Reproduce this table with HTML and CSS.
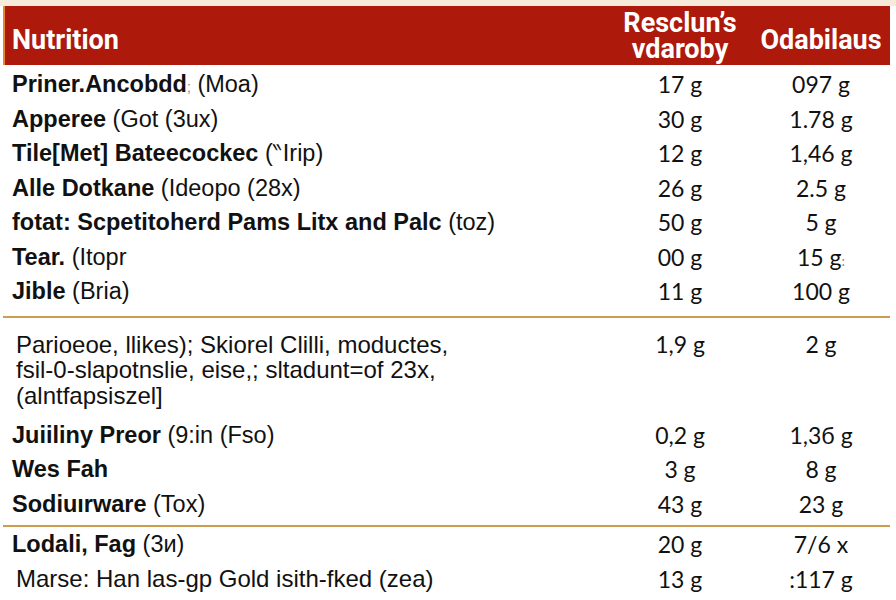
FILE: index.html
```html
<!DOCTYPE html>
<html lang="en">
<head>
<meta charset="utf-8">
<title>Nutrition</title>
<link rel="stylesheet" href="styles.css">
</head>
<body>
<div class="page">
  <div class="head">
    <div class="head-title">Nutrition</div>
    <div class="head-col"><span class="hl">Resclun’s</span><span class="hl">vdaroby</span></div>
    <div class="head-col single">Odabilaus</div>
  </div>

  <div class="section first">
    <div class="row"><div class="label"><b>Priner.Ancobdd</b><span class="mark">;</span> (Moa)</div><div class="val">17 g</div><div class="val">097 g</div></div>
    <div class="row"><div class="label"><b>Apperee</b> (Got (3ux)</div><div class="val">30 g</div><div class="val">1.78 g</div></div>
    <div class="row"><div class="label"><b>Tile[Met] Bateecockec</b> (‶Irip)</div><div class="val">12 g</div><div class="val">1,46 g</div></div>
    <div class="row"><div class="label"><b>Alle Dotkane</b> (Ideopo (28x)</div><div class="val">26 g</div><div class="val">2.5 g</div></div>
    <div class="row"><div class="label"><b>fotat: Scpetitoherd Pams Litx and Palc</b> (toz)</div><div class="val">50 g</div><div class="val">5 g</div></div>
    <div class="row"><div class="label"><b>Tear.</b> (Itopr</div><div class="val">00 g</div><div class="val">15 g<span class="mark">:</span></div></div>
    <div class="row"><div class="label"><b>Jible</b> (Bria)</div><div class="val">11 g</div><div class="val">100 g</div></div>
  </div>

  <div class="section">
    <div class="row multi">
      <div class="label plain">
        <span class="line">Parioeoe, llikes); Skiorel Clilli, moductes,</span>
        <span class="line">fsil-0-slapotnslie, eise,; sltadunt=of 23x,</span>
        <span class="line">(alntfapsiszel]</span>
      </div>
      <div class="val">1,9 g</div>
      <div class="val">2 g</div>
    </div>
    <div class="row"><div class="label"><b>Juiiliny Preor</b> (9:in (Fso)</div><div class="val">0,2 g</div><div class="val">1,3б g</div></div>
    <div class="row"><div class="label"><b>Wes Fah</b></div><div class="val">3 g</div><div class="val">8 g</div></div>
    <div class="row"><div class="label"><b>Sodiuırware</b> (Tox)</div><div class="val">43 g</div><div class="val">23 g</div></div>
  </div>

  <div class="section last">
    <div class="row"><div class="label"><b>Lodali, Fag</b> (3и)</div><div class="val">20 g</div><div class="val">7/6 x</div></div>
    <div class="row"><div class="label plain">Marse: Han las-gp Gold isith-fked (zea)</div><div class="val">13 g</div><div class="val">:117 g</div></div>
  </div>
</div>
</body>
</html>
```

FILE: styles.css
```css
* { box-sizing: border-box; }

body {
  margin: 0;
  background: #ffffff;
  font-family: "Liberation Sans", Arial, sans-serif;
  color: #111111;
}

.page {
  width: 896px;
  height: 600px;
  overflow: hidden;
  padding: 6px 6px 0 3px;
  background: linear-gradient(#f6eadb 0, #f6eadb 6px, #ffffff 6px);
}

.head {
  display: grid;
  grid-template-columns: 1fr 120px 138px;
  column-gap: 12px;
  align-items: center;
  height: 59px;
  padding-left: 7px;
  background: #ad190b;
  border-left: 2px solid #e48a2c;
  color: #ffffff;
  font-family: Roboto, "Liberation Sans", sans-serif;
  font-weight: 700;
  font-size: 27px;
}

.head-title { padding-top: 8px; }

.head-col {
  text-align: center;
  white-space: nowrap;
}

.head-col .hl {
  display: block;
  height: 26px;
  line-height: 26px;
  overflow: visible;
}

.head-col.single { padding-top: 8px; }

.section {
  border-top: 2px solid #cc9d4c;
  padding-bottom: 4px;
}

.section.first {
  border-top: none;
  padding-top: 2px;
  padding-bottom: 7px;
}

.section.last { padding-bottom: 0; }

.row {
  display: grid;
  grid-template-columns: 1fr 120px 138px;
  column-gap: 12px;
  height: 34.5px;
  line-height: 34.5px;
  padding-left: 9px;
  font-size: 23.5px;
}

.label { white-space: nowrap; }

.label b { font-weight: 700; }

.label.plain { padding-left: 4px; font-size: 24px; }

.mark { color: #888888; font-size: 14px; }

.val {
  text-align: center;
  font-family: Lato, "Open Sans", sans-serif;
  font-size: 23px;
}

.row.multi {
  height: 100px;
  line-height: 25.5px;
  padding-top: 14px;
}

.row.multi .line { display: block; }
```
